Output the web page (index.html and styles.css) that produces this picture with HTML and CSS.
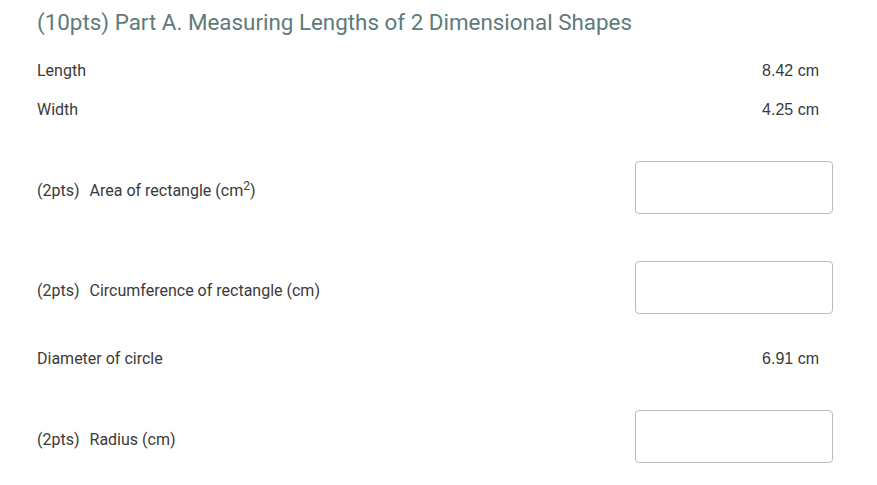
FILE: index.html
```html
<!DOCTYPE html>
<html>
<head>
<meta charset="utf-8">
<link rel="stylesheet" href="styles.css">
</head>
<body>
<div class="page">
  <h1 class="title">(10pts) Part A. Measuring Lengths of 2 Dimensional Shapes</h1>
  <div class="row info first">
    <span class="label">Length</span>
    <span class="value">8.42 cm</span>
  </div>
  <div class="row info">
    <span class="label">Width</span>
    <span class="value">4.25 cm</span>
  </div>
  <div class="row answer area">
    <span class="label"><span class="pts">(2pts)</span>Area of rectangle (cm<sup>2</sup>)</span>
    <div class="box"></div>
  </div>
  <div class="row answer circ">
    <span class="label"><span class="pts">(2pts)</span>Circumference of rectangle (cm)</span>
    <div class="box"></div>
  </div>
  <div class="row info diam">
    <span class="label">Diameter of circle</span>
    <span class="value">6.91 cm</span>
  </div>
  <div class="row answer radius">
    <span class="label"><span class="pts">(2pts)</span>Radius (cm)</span>
    <div class="box"></div>
  </div>
</div>
</body>
</html>
```

FILE: styles.css
```css
html, body {
  margin: 0;
  padding: 0;
  background: #ffffff;
}
.page {
  width: 796px;
  padding-left: 37px;
  font-family: Roboto, "Liberation Sans", sans-serif;
  color: #333333;
}
.title {
  margin: 0;
  height: 44px;
  line-height: 44px;
  font-size: 22.4px;
  font-weight: 400;
  color: #5d7b7b;
}
.row {
  display: flex;
  align-items: center;
  justify-content: space-between;
}
.info {
  height: 39px;
}
.info.first {
  margin-top: 7px;
}
.answer {
  height: 53px;
}
.answer .label {
  padding-top: 5px;
}
.area { margin-top: 32px; }
.circ { margin-top: 47px; }
.diam { margin-top: 25px; }
.radius { margin-top: 32px; }
.label {
  font-size: 16px;
  color: #3a3a3a;
}
.pts {
  margin-right: 10px;
}
sup {
  font-size: 12px;
  line-height: 0;
  vertical-align: 6px;
}
.value {
  font-family: "Liberation Sans", Arial, sans-serif;
  font-size: 16px;
  color: #3a3a3a;
  margin-right: 14px;
}
.box {
  width: 196px;
  height: 51px;
  border: 1px solid #bcbcbc;
  border-radius: 4px;
}
```
